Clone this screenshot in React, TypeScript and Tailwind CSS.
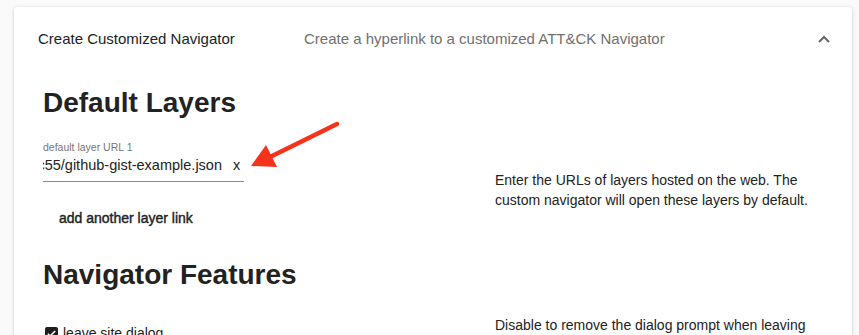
import React from 'react';

const CheckBox: React.FC = () => (
  <span className="inline-flex items-center justify-center w-[13px] h-[13px] rounded-[2px] bg-[#1f1f1f]">
    <svg width="11" height="11" viewBox="0 0 24 24" fill="none" stroke="#fff" strokeWidth="3.5">
      <path d="M4 12.5l5 5L20 6.5" />
    </svg>
  </span>
);

const App: React.FC = () => {
  return (
    <div
      className="relative h-[335px] overflow-hidden bg-[#fafafa] pt-[7px] pl-[14px] pr-[7px] text-[#222]"
      style={{ fontFamily: '"Liberation Sans", Arial, sans-serif' }}
    >
      <div className="bg-white rounded-t-[4px] shadow-[0_1px_4px_rgba(0,0,0,0.18)] min-h-[400px]">
        {/* panel header */}
        <div className="h-[64px] flex items-center pl-6 pr-[22px] text-[15px]">
          <span className="w-[266px] text-[#222]">Create Customized Navigator</span>
          <span className="flex-1 text-[#707070]">Create a hyperlink to a customized ATT&amp;CK Navigator</span>
          <svg width="12" height="8" viewBox="0 0 12 8" fill="none" stroke="#666" strokeWidth="2">
            <path d="M1 7l5-5 5 5" />
          </svg>
        </div>

        {/* panel body */}
        <div className="pl-[29px]">
          <h2 className="mt-[16px] text-[28px] leading-[32px] font-bold text-[#222]">Default Layers</h2>

          <div className="mt-[21px] flex items-center">
            <div className="w-[452px]">
              <div className="text-[10.5px] leading-[14px] text-[#777]">default layer URL 1</div>
              <div className="mt-[1px] w-[201px] flex border-b border-[#8c8c8c] pb-[6px] text-[14.5px] leading-[20px] text-[#222]">
                <div className="w-[179px] overflow-hidden whitespace-nowrap flex justify-end">
                  <span>gist.githubusercontent.com/mitre/3f1c55/github-gist-example.json</span>
                </div>
                <span className="ml-[11px]">x</span>
              </div>
              <div className="mt-[18px] h-[36px] flex items-center pl-4 text-[14px] text-[#222] [-webkit-text-stroke:0.4px_#222]">
                add another layer link
              </div>
            </div>
            <p className="w-[333px] pt-[3px] text-[14px] leading-[20px] text-[#222]">
              Enter the URLs of layers hosted on the web. The custom navigator will open these layers by default.
            </p>
          </div>

          <h2 className="mt-[23px] text-[28px] leading-[32px] font-bold text-[#222]">Navigator Features</h2>

          <div className="mt-[24px] flex items-start">
            <div className="w-[452px] pt-[8px] pl-[2px] flex items-center gap-[5px] text-[14px] leading-[20px]">
              <CheckBox />
              <span>leave site dialog</span>
            </div>
            <p className="w-[333px] text-[14px] leading-[20px] text-[#222]">
              Disable to remove the dialog prompt when leaving the site.
            </p>
          </div>
        </div>
      </div>

      {/* annotation arrow */}
      <svg className="absolute left-[240px] top-[115px]" width="110" height="65" viewBox="0 0 110 65">
        <line x1="97" y1="9" x2="28" y2="43" stroke="#f5331b" strokeWidth="4.5" strokeLinecap="round" />
        <polygon points="11,51 26,30 37,52" fill="#f5331b" />
      </svg>
    </div>
  );
};

export default App;
